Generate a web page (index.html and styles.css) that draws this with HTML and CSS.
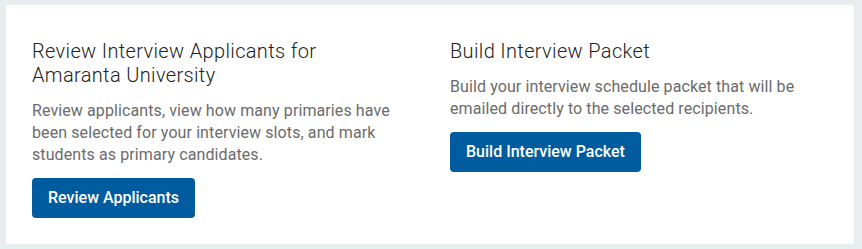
FILE: index.html
```html
<!DOCTYPE html>
<html lang="en">
<head>
<meta charset="utf-8">
<title>Interview</title>
<link rel="stylesheet" href="styles.css">
</head>
<body>
<div class="card">
  <section class="col">
    <h3 class="title">Review Interview Applicants for Amaranta University</h3>
    <p class="desc">Review applicants, view how many primaries have been selected for your interview slots, and mark students as primary candidates.</p>
    <a class="btn" href="#">Review Applicants</a>
  </section>
  <section class="col">
    <h3 class="title">Build Interview Packet</h3>
    <p class="desc">Build your interview schedule packet that will be emailed directly to the selected recipients.</p>
    <a class="btn" href="#">Build Interview Packet</a>
  </section>
</div>
</body>
</html>
```
FILE: styles.css
```css
html, body {
  margin: 0;
  background: #e8edf0;
}
body {
  padding: 5px 8px 5px 6px;
  font-family: Roboto, "Noto Sans", "Liberation Sans", sans-serif;
}
.card {
  background: #ffffff;
  border-radius: 3px;
  padding: 34px 26px 26px;
  display: grid;
  grid-template-columns: 1fr 1fr;
  column-gap: 40px;
  align-items: start;
}
.col {
  display: flex;
  flex-direction: column;
  align-items: flex-start;
}
.title {
  margin: 0 0 13px;
  font-size: 20px;
  line-height: 24px;
  font-weight: 300;
  letter-spacing: 0.35px;
  color: #222222;
  max-width: 360px;
}
.desc {
  margin: 0 0 12px;
  font-size: 16px;
  line-height: 22px;
  letter-spacing: 0.1px;
  color: #6b6b6b;
}
.btn {
  display: inline-block;
  height: 40px;
  line-height: 40px;
  padding: 0 16px;
  background: #005c9e;
  color: #ffffff;
  border-radius: 4px;
  font-size: 16px;
  font-weight: 500;
  text-decoration: none;
}
```
